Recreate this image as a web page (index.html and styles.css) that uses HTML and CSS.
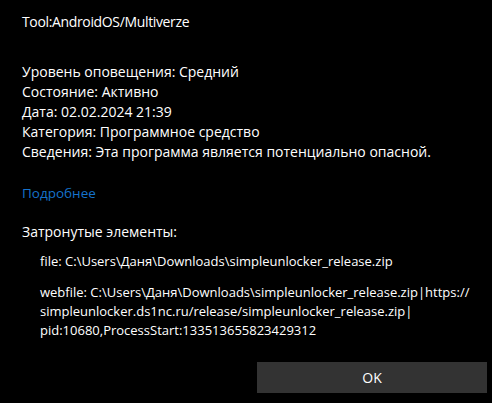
FILE: index.html
```html
<!DOCTYPE html>
<html lang="ru">
<head>
<meta charset="UTF-8" />
<meta name="viewport" content="width=device-width, initial-scale=1" />
<title>Tool:AndroidOS/Multiverze</title>
<link rel="stylesheet" href="styles.css">
</head>
<body>

<div class="dialog">
  <div class="content">
    <h1 class="title">Tool:AndroidOS/Multiverze</h1>

    <div class="details">
      <div>Уровень оповещения: Средний</div>
      <div>Состояние: Активно</div>
      <div>Дата: 02.02.2024 21:39</div>
      <div>Категория: Программное средство</div>
      <div>Сведения: Эта программа является потенциально опасной.</div>
    </div>

    <a class="more" href="#">Подробнее</a>

    <div class="affected">Затронутые элементы:</div>
    <ul class="items">
      <li>file: C:\Users\Даня\Downloads\simpleunlocker_release.zip</li>
      <li>webfile: C:\Users\Даня\Downloads\simpleunlocker_release.zip|https://<br>simpleunlocker.ds1nc.ru/release/simpleunlocker_release.zip|<br>pid:10680,ProcessStart:133513655823429312</li>
    </ul>
  </div>

  <div class="actions">
    <button class="ok">OK</button>
  </div>
</div>

</body>
</html>
```

FILE: styles.css
```css
body {
  margin: 0;
  background: #000;
  color: #fff;
  font-family: "Open Sans", "Noto Sans", sans-serif;
}
.dialog {
  width: 492px;
  height: 403px;
  display: flex;
  flex-direction: column;
  box-sizing: border-box;
}
.content {
  flex: 1;
  padding: 12px 22px 0;
}
.title {
  margin: 0;
  font-size: 14px;
  font-weight: normal;
  line-height: 20px;
  letter-spacing: -0.35px;
}
.details {
  margin-top: 30px;
  font-size: 14px;
  line-height: 20px;
}
.more {
  display: block;
  margin-top: 21px;
  color: #1573cc;
  text-decoration: none;
  font-size: 13.5px;
  line-height: 20px;
}
.affected {
  margin-top: 19px;
  font-size: 14px;
  line-height: 20px;
}
.items {
  list-style: none;
  margin: 10px 0 0;
  padding: 0 0 0 18px;
  font-size: 13px;
  line-height: 19px;
}
.items li {
  margin-bottom: 12px;
}
.actions {
  display: flex;
  justify-content: flex-end;
  padding: 0 5px 10px;
}
.ok {
  width: 230px;
  height: 31px;
  border: none;
  background: #333;
  color: #fff;
  font-family: inherit;
  font-size: 14px;
}
```
